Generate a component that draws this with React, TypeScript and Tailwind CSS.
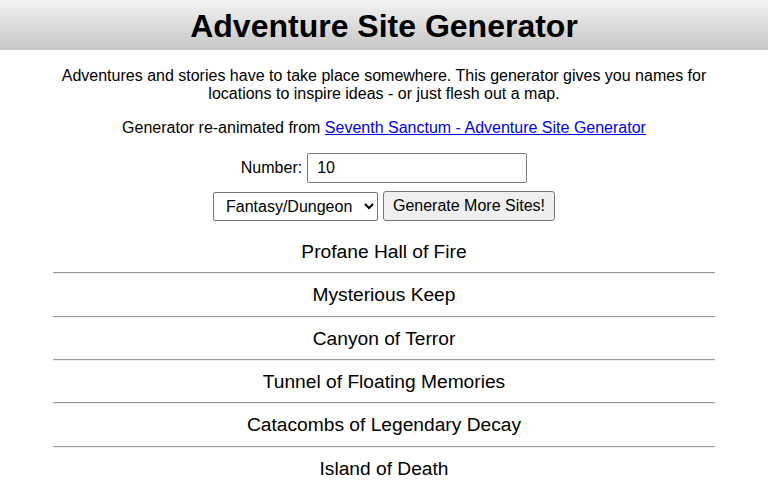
import React from "react";

const sites = [
  "Profane Hall of Fire",
  "Mysterious Keep",
  "Canyon of Terror",
  "Tunnel of Floating Memories",
  "Catacombs of Legendary Decay",
  "Island of Death",
  "Forest of Shadows",
  "Temple of the Lost",
  "Caverns of Doom",
  "Tower of Whispers",
];

export default function App() {
  return (
    <div className="min-h-screen bg-white text-black text-[16px]" style={{ fontFamily: '"Liberation Sans", Arial, sans-serif' }}>
      <header className="h-[50px] flex items-center justify-center bg-gradient-to-b from-[#f3f3f3] to-[#c6c6c6]">
        <h1 className="text-[32px] font-bold leading-none pt-[2px]">Adventure Site Generator</h1>
      </header>
      <main className="px-[53px] flex flex-col items-center">
        <p className="mt-[17px] text-center leading-[18px] px-[8px]">
          Adventures and stories have to take place somewhere. This generator gives you names for locations to inspire ideas - or just flesh out a map.
        </p>
        <p className="mt-[16px] text-center leading-[18px]">
          Generator re-animated from{" "}
          <a href="#" className="text-[#0000ee] underline">Seventh Sanctum - Adventure Site Generator</a>
        </p>
        <div className="mt-[16px] flex items-center gap-[5px]">
          <label>Number:</label>
          <input
            defaultValue="10"
            className="w-[220px] h-[30px] border border-[#767676] rounded-[2px] px-[9px] text-[16px] outline-none"
          />
        </div>
        <div className="mt-[8px] flex items-center gap-[5px]">
          <select className="w-[165px] h-[29px] border border-[#767676] rounded-[2px] bg-white px-[8px] text-[16px]">
            <option>Fantasy/Dungeon</option>
          </select>
          <button className="w-[172px] h-[30px] border border-[#767676] rounded-[3px] bg-[#efefef] text-[16px]">
            Generate More Sites!
          </button>
        </div>
        <div className="mt-[9px] w-full">
          {sites.map((s) => (
            <div key={s} className="w-full">
              <div className="text-center text-[19.2px] leading-[21.33px] pt-[11px] pb-[10px]">{s}</div>
              <div className="border-t border-t-[#9a9a9a] shadow-[0_1px_0_#eeeeee]" />
            </div>
          ))}
        </div>
      </main>
    </div>
  );
}
